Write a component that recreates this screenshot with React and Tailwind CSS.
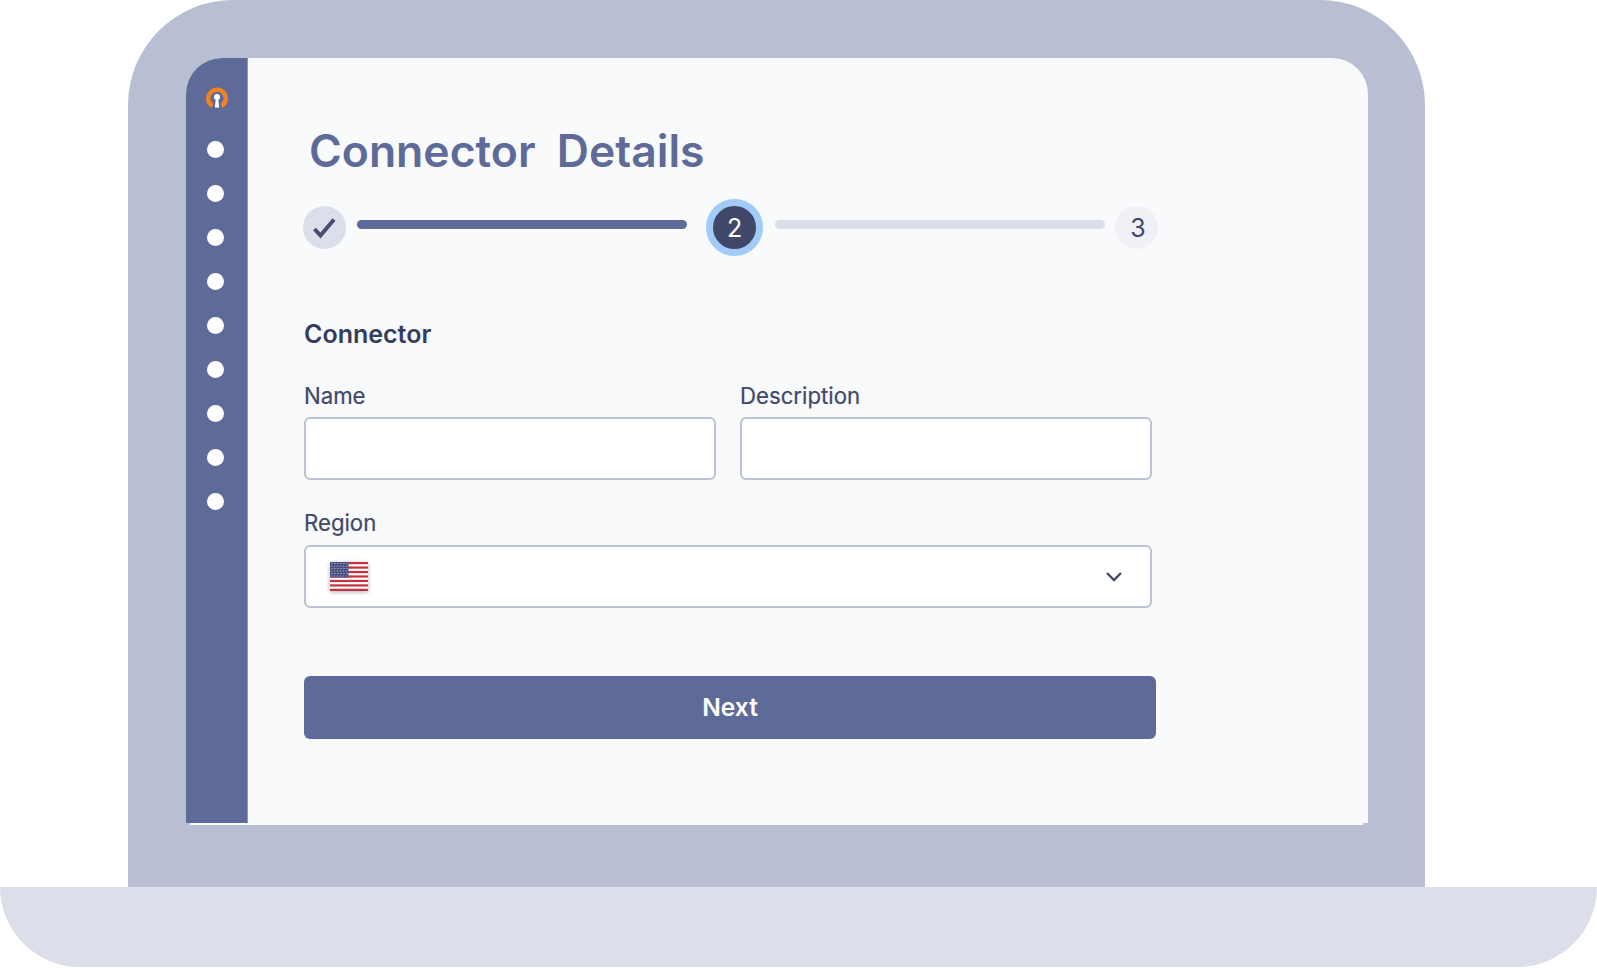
import React from "react";

const font = { fontFamily: "Inter, 'Noto Sans', sans-serif" };

function Logo() {
  return (
    <svg width="24" height="24" viewBox="0 0 24 24" className="block">
      <path d="M6.4 22 A11 11 0 1 1 17.6 22 L15.6 17.8 A6.6 6.6 0 1 0 8.4 17.8 Z" fill="#f58220" />
      <circle cx="12" cy="11" r="3" fill="#ffffff" />
      <path d="M11 11 H13 L14.2 21.5 H9.8 Z" fill="#ffffff" />
    </svg>
  );
}

function Flag() {
  const stripes = [0, 2, 4, 6, 8, 10, 12];
  return (
    <svg width="38" height="29" viewBox="0 0 38 29" className="block drop-shadow-[0_1px_2px_rgba(60,70,100,0.45)]">
      <rect width="38" height="29" fill="#ffffff" />
      {stripes.map((i) => (
        <rect key={i} y={(i * 29) / 13} width="38" height={29 / 13} fill="#c8313e" />
      ))}
      <rect width="18.5" height="15.6" fill="#4a4f82" />
      {[1.5, 4, 6.5, 9, 11.5, 14].map((y, r) =>
        [2, 5, 8, 11, 14, 17].map((x) => (
          <circle key={`${r}-${x}`} cx={x - (r % 2 ? 0.8 : 0)} cy={y} r="0.55" fill="#d8dbec" />
        ))
      )}
    </svg>
  );
}

function Field({ label, className }) {
  return (
    <div className={className}>
      <div className="text-[22.2px] leading-[28px] font-normal text-[#3f4868] [-webkit-text-stroke:0.2px_#3f4868]">{label}</div>
      <div className="mt-[7px] h-[63px] rounded-[6px] border-2 border-[#bcc2d6] bg-white" />
    </div>
  );
}

export default function App() {
  const dots = [0, 1, 2, 3, 4, 5, 6, 7, 8];
  return (
    <div className="w-[1597px] h-[968px] bg-white flex flex-col overflow-hidden" style={font}>
      <div className="ml-[128px] w-[1297px] h-[887px] bg-[#b9bfd3] rounded-t-[105px] pt-[58px] px-[58px]">
        <div className="flex h-[765px] w-[1182px] rounded-t-[36px] overflow-hidden bg-[#f9fafc]">
          <div className="w-[62px] shrink-0 bg-[#5e6b98] border-r border-[#8f98b8] flex flex-col items-center">
            <div className="mt-[28px] ml-[1px]">
              <Logo />
            </div>
            <div className="mt-[31px] mr-[3px] flex flex-col gap-[27px]">
              {dots.map((d) => (
                <div key={d} className="w-[17px] h-[17px] rounded-full bg-white" />
              ))}
            </div>
          </div>
          <div className="flex-1 pl-[56px] pt-[62px]">
            <h1 className="ml-[5px] text-[44.5px] leading-[62px] font-semibold text-[#5e6b98] [word-spacing:10px]">
              Connector Details
            </h1>
            <div className="ml-[-1px] mt-[17px] flex items-center text-[#3f4868]">
              <div className="w-[43px] h-[43px] rounded-full bg-[#dcdeea] flex items-center justify-center">
                <svg width="26" height="22" viewBox="0 0 26 22" fill="none">
                  <path d="M2.5 12 L8.5 18.5 L22 2.5" stroke="#464f72" strokeWidth="4" />
                </svg>
              </div>
              <div className="ml-[11px] mb-[7px] w-[330px] h-[9px] rounded-full bg-[#5e6b98]" />
              <div className="ml-[19px] w-[57px] h-[57px] rounded-full border-[7px] border-[#a3cbf8] bg-[#3f4868] flex items-center justify-center text-[25px] text-white pt-[3px]">
                2
              </div>
              <div className="ml-[12px] mb-[7px] w-[330px] h-[9px] rounded-full bg-[#dcdeea]" />
              <div className="ml-[10px] w-[43px] h-[43px] rounded-full bg-[#f0f1f6] flex items-center justify-center text-[25px] pl-[3px] pt-[3px]">
                3
              </div>
            </div>
            <div className="mt-[62px] text-[25px] leading-[32px] font-semibold text-[#353d5c]">Connector</div>
            <div className="mt-[32px] flex gap-[24px] w-[848px]">
              <Field label="Name" className="w-[412px]" />
              <Field label="Description" className="w-[412px]" />
            </div>
            <div className="mt-[29px] w-[848px] text-[22.2px] leading-[28px] font-normal text-[#3f4868] [-webkit-text-stroke:0.2px_#3f4868]">Region</div>
            <div className="mt-[8px] w-[848px] h-[63px] rounded-[6px] border-2 border-[#bcc2d6] bg-white flex items-center justify-between pl-[24px] pr-[27px]">
              <Flag />
              <svg width="18" height="11" viewBox="0 0 18 11" fill="none">
                <path d="M2 2 L9 9 L16 2" stroke="#3f4868" strokeWidth="2.3" />
              </svg>
            </div>
            <div className="mt-[68px] w-[852px] h-[63px] rounded-[6px] bg-[#5e6b98] flex items-center justify-center text-[24.5px] font-semibold text-white">
              Next
            </div>
          </div>
        </div>
        <div className="mx-[4px] h-[2px] bg-[#f9fafc]" />
      </div>
      <div className="h-[80px] w-[1597px] bg-[#dcdeea] rounded-b-[80px]" />
    </div>
  );
}
